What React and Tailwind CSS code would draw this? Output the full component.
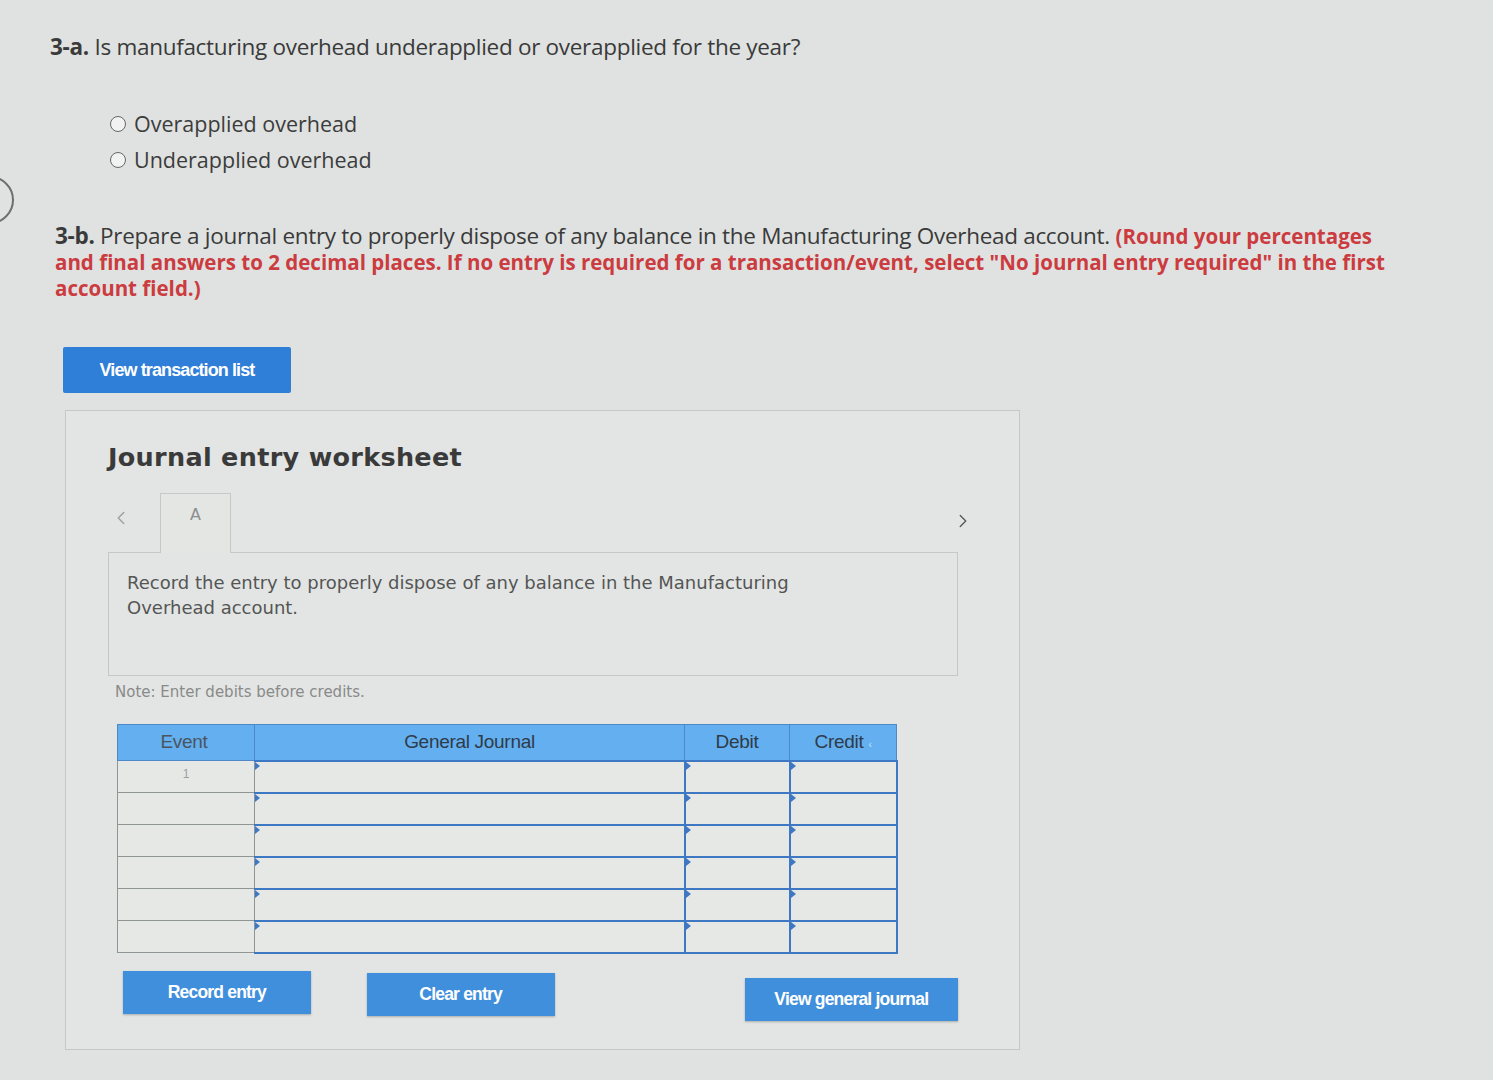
import { ChevronLeft, ChevronRight } from "lucide-react";

const rows = [1, 2, 3, 4, 5, 6];

const Marker = () => (
  <span className="absolute left-0 top-0 w-0 h-0 border-t-[4px] border-b-[4px] border-l-[5px] border-t-transparent border-b-transparent border-l-[#3f78c2]" />
);

const Radio = ({ label }) => (
  <label className="flex items-center gap-[8px] text-[21.5px] text-[#3c3c3c]">
    <span className="w-[16px] h-[16px] rounded-full border-[1.5px] border-[#666] bg-[#f1f2f1]" />
    {label}
  </label>
);

const ActionButton = ({ children, className }) => (
  <button
    className={`h-[43px] bg-[#3f8fdc] text-white font-bold text-[17.5px] tracking-[-0.8px] shadow-[0_1px_2px_rgba(0,0,0,0.25)] ${className}`}
    style={{ fontFamily: '"Liberation Sans", Arial, sans-serif' }}
  >
    {children}
  </button>
);

export default function App() {
  return (
    <div
      className="relative w-[1493px] h-[1080px] overflow-hidden bg-[#dfe2e0]"
      style={{ fontFamily: '"Open Sans", "Noto Sans", sans-serif' }}
    >
      {/* half-hidden round button at left edge */}
      <span className="absolute left-[-34px] top-[176px] w-[48px] h-[48px] rounded-full border-[2px] border-[#6b6f6e]" />

      <div className="pl-[50px] pt-[30px]">
        <p className="text-[22.5px] text-[#3a3a3a] tracking-[-0.3px]">
          <span className="font-bold">3-a.</span> Is manufacturing overhead underapplied or overapplied for the year?
        </p>

        <div className="mt-[44px] ml-[60px] flex flex-col gap-[4px]">
          <Radio label="Overapplied overhead" />
          <Radio label="Underapplied overhead" />
        </div>

        <p className="mt-[47px] ml-[5px] w-[1345px] text-[22.5px] leading-[26px] text-[#3a3a3a] tracking-[-0.3px]">
          <span className="font-bold">3-b.</span> Prepare a journal entry to properly dispose of any balance in the Manufacturing Overhead account.{" "}
          <span className="font-bold text-[#cc3b3f] text-[20.5px] tracking-[0px]">
            (Round your percentages and final answers to 2 decimal places. If no entry is required for a transaction/event, select "No journal entry required" in the first account field.)
          </span>
        </p>

        <button
          className="mt-[46px] ml-[13px] w-[228px] h-[46px] rounded-[2px] bg-[#2f7ed8] text-white font-bold text-[18px] tracking-[-0.9px]"
          style={{ fontFamily: '"Liberation Sans", Arial, sans-serif' }}
        >
          View transaction list
        </button>

        <div
          className="mt-[17px] ml-[15px] w-[955px] h-[640px] border border-[#c4c8c6] bg-[#e2e5e3] pl-[42px] pr-[61px] pt-[27px]"
          style={{ fontFamily: '"DejaVu Sans", Verdana, sans-serif' }}
        >
          <h2 className="text-[25.5px] font-bold text-[#3a3a3a] tracking-[0.3px]">Journal entry worksheet</h2>

          <div className="mt-[16px] flex items-end">
            <div className="w-[52px] h-[59px] flex items-center pl-[2px] border-b border-[#c4c8c6]">
              <ChevronLeft className="w-[22px] h-[22px] text-[#9aa0a0] -mt-[10px]" strokeWidth={1.5} />
            </div>
            <div className="w-[71px] h-[60px] border border-b-0 border-[#c4c8c6] bg-[#e4e6e4] flex justify-center pt-[9px] text-[16px] text-[#8a8f8e]">
              A
            </div>
            <div className="flex-1 h-[59px] flex items-center justify-end border-b border-[#c4c8c6]">
              <ChevronRight className="w-[22px] h-[22px] text-[#55595a] mr-[-16px] -mt-[4px]" strokeWidth={1.5} />
            </div>
          </div>

          <div className="h-[124px] -mt-px border border-t-0 border-[#c4c8c6] pl-[18px] pt-[18px] text-[18px] leading-[25px] text-[#555]">
            <p className="w-[700px]">Record the entry to properly dispose of any balance in the Manufacturing Overhead account.</p>
          </div>

          <p className="mt-[5px] ml-[7px] text-[15px] text-[#8a8a8a]">Note: Enter debits before credits.</p>

          <table
            className="mt-[21px] ml-[9px] border-collapse bg-[#e6e8e6]"
            style={{ fontFamily: '"Liberation Sans", Arial, sans-serif' }}
          >
            <thead>
              <tr className="h-[36px] bg-[#63aff0] text-[19px] text-[#2f3b48] tracking-[-0.3px]">
                <th className="w-[137px] font-normal border border-[#4f88c6] pr-[4px] text-[#4b5560]">Event</th>
                <th className="w-[430px] font-normal border border-[#4f88c6]">General Journal</th>
                <th className="w-[105px] font-normal border border-[#4f88c6]">Debit</th>
                <th className="w-[107px] font-normal border border-[#4f88c6]">
                  Credit <span className="text-[10px] text-[#cde4f7]">‹</span>
                </th>
              </tr>
            </thead>
            <tbody>
              {rows.map((r) => (
                <tr key={r} className="h-[32px]">
                  <td className="border border-[#8e9595] text-center align-top pt-[4px] text-[12px] text-[#9aa0a0]">
                    {r === 1 ? "1" : ""}
                  </td>
                  <td className="relative border-[2px] border-l-[1px] border-[#3f78c2]">
                    <Marker />
                  </td>
                  <td className="relative border-[2px] border-l-[1px] border-[#3f78c2]">
                    <Marker />
                  </td>
                  <td className="relative border-[2px] border-l-[1px] border-[#3f78c2]">
                    <Marker />
                  </td>
                </tr>
              ))}
            </tbody>
          </table>

          <div className="mt-[17px] ml-[15px] flex items-start">
            <ActionButton className="w-[190px] text-[#d7e8f8]">Record entry</ActionButton>
            <ActionButton className="ml-[56px] mt-[2px] w-[190px]">Clear entry</ActionButton>
            <ActionButton className="ml-[190px] mt-[7px] w-[216px]">View general journal</ActionButton>
          </div>
        </div>
      </div>
    </div>
  );
}
